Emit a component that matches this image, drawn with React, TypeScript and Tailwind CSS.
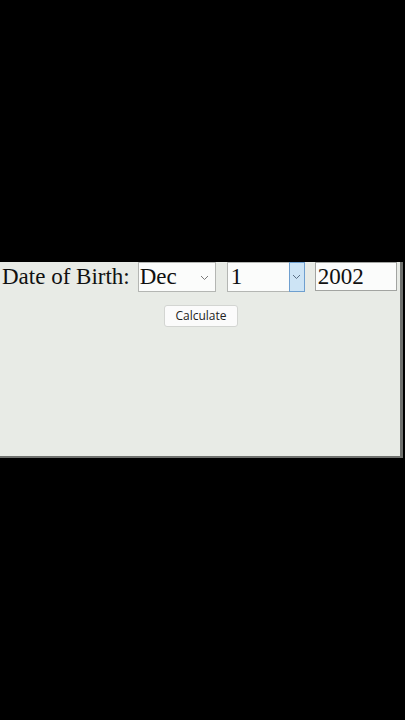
import React from "react";

function Chevron({ color = "#7a7a7a" }: { color?: string }) {
  return (
    <svg width="9" height="6" viewBox="0 0 9 6" fill="none">
      <path d="M1 1 L4.5 4.5 L8 1" stroke={color} strokeWidth="1" />
    </svg>
  );
}

export default function App() {
  const serif = { fontFamily: '"Liberation Serif", "Times New Roman", serif' };
  return (
    <div className="w-[405px] h-[720px] bg-black overflow-hidden">
      <div className="mt-[262px] w-[403px] h-[196px] bg-[#e8ebe6] border-r-[3px] border-b-[2px] border-[#6f716e] flex flex-col">
        <div className="flex items-start h-[30px]" style={serif}>
          <span className="ml-[2px] mt-[1px] text-[23px] leading-[28px] text-[#111] whitespace-nowrap">
            Date of Birth:
          </span>
          <div className="ml-[8px] w-[78px] h-[30px] bg-[#fbfcfb] border border-[#b4b6b3] flex items-center">
            <span className="ml-[1px] text-[23px] leading-[28px] text-[#111]">Dec</span>
            <span className="ml-auto mr-[6px] mt-[1px] flex">
              <Chevron />
            </span>
          </div>
          <div className="ml-[11px] w-[78px] h-[30px] bg-[#fbfcfb] border border-[#b4b6b3] flex items-stretch">
            <span className="ml-[3px] text-[23px] leading-[28px] text-[#111]">1</span>
            <span className="ml-auto -mr-px -my-px w-[16px] bg-[#cde4f5] border border-[#6e9fcf] flex items-center justify-center">
              <Chevron color="#5a6f85" />
            </span>
          </div>
          <div className="ml-[10px] w-[82px] h-[29px] bg-[#fbfcfb] border border-[#a2a4a1] flex items-center">
            <span className="ml-[2px] text-[23px] leading-[28px] text-[#111]">2002</span>
          </div>
        </div>
        <div className="flex justify-center mt-[13px] pl-[2px]">
          <div
            className="w-[74px] h-[22px] bg-[#fbfbfb] border border-[#d3d5d2] rounded-[3px] flex items-center justify-center text-[12px] text-[#222]"
            style={{ fontFamily: '"Open Sans", "Noto Sans", sans-serif' }}
          >
            Calculate
          </div>
        </div>
      </div>
    </div>
  );
}
